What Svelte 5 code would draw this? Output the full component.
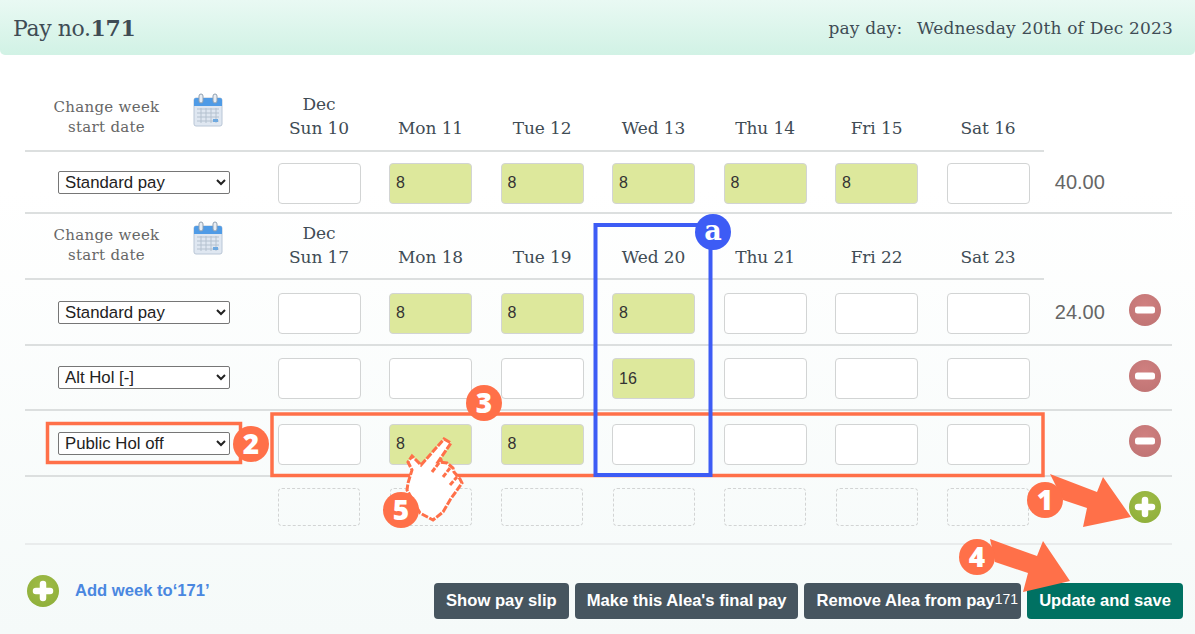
<script lang="ts">
	const payTypes = ['Standard pay', 'Alt Hol [-]', 'Public Hol off'];

	const weeks = [
		{
			days: ['Sun 10', 'Mon 11', 'Tue 12', 'Wed 13', 'Thu 14', 'Fri 15', 'Sat 16'],
			rows: [{ type: 'Standard pay', hours: ['', '8', '8', '8', '8', '8', ''], total: '40.00', remove: false }]
		},
		{
			days: ['Sun 17', 'Mon 18', 'Tue 19', 'Wed 20', 'Thu 21', 'Fri 22', 'Sat 23'],
			rows: [
				{ type: 'Standard pay', hours: ['', '8', '8', '8', '', '', ''], total: '24.00', remove: true },
				{ type: 'Alt Hol [-]', hours: ['', '', '', '16', '', '', ''], total: '', remove: true },
				{ type: 'Public Hol off', hours: ['', '8', '8', '', '', '', ''], total: '', remove: true }
			]
		}
	];

	const badges = [
		{ n: '1', x: 1045, y: 500 },
		{ n: '2', x: 251, y: 444 },
		{ n: '3', x: 484, y: 403 },
		{ n: '4', x: 977, y: 557 },
		{ n: '5', x: 401, y: 510 }
	];
</script>

{#snippet calendar()}
	<svg class="cal" width="30" height="34" viewBox="0 0 30 34">
		<rect x="1" y="5" width="28" height="28" rx="2" fill="#dfe7f1" stroke="#b9c6d6" />
		<path d="M1 13V7a2 2 0 0 1 2-2h24a2 2 0 0 1 2 2v6z" fill="#4f9be6" />
		<rect x="6" y="1" width="4" height="9" rx="2" fill="#e8edf3" stroke="#8fa0b2" />
		<rect x="20" y="1" width="4" height="9" rx="2" fill="#e8edf3" stroke="#8fa0b2" />
		<path d="M4 16h22M4 20h22M4 24h22M4 28h22M8 15v15M13 15v15M18 15v15M23 15v15" stroke="#b4c1cf" fill="none" />
		<rect x="20" y="26" width="5" height="3" fill="#6ea9e0" />
	</svg>
{/snippet}

{#snippet roundIcon(kind: string)}
	<span class="round {kind}">
		<svg width="22" height="22" viewBox="0 0 22 22">
			{#if kind === 'plus'}
				<path d="M11 4v14M4 11h14" stroke="#fff" stroke-width="6.5" stroke-linecap="round" />
			{:else}
				<rect x="1" y="7.5" width="20" height="7" rx="2.5" fill="#fff" />
			{/if}
		</svg>
	</span>
{/snippet}

<div class="page">
	<header class="top">
		<h1>Pay no.<b>171</b></h1>
		<p><span class="label">pay day:</span> Wednesday 20th of Dec 2023</p>
	</header>

	<main class="sheet">
		{#each weeks as week, w}
			<div class="week-head" class:first={w === 0}>
				<div class="change">
					<span class="change-text">Change week<br />start date</span>
					{@render calendar()}
				</div>
				{#each week.days as day, i}
					<div class="day">
						{#if i === 0}<span>Dec</span>{/if}
						<span>{day}</span>
					</div>
				{/each}
			</div>
			{#each week.rows as row, r}
				<div class="row" class:short={w === 0} class:mid={w === 1 && r === 1}>
					<div class="type">
						<select value={row.type}>
							{#each payTypes as t}
								<option>{t}</option>
							{/each}
						</select>
					</div>
					{#each row.hours as h}
						<div class="cell">
							<input type="text" value={h} class:filled={h !== ''} />
						</div>
					{/each}
					<div class="total">{row.total}</div>
					<div class="action">
						{#if row.remove}{@render roundIcon('minus')}{/if}
					</div>
				</div>
			{/each}
		{/each}

		<div class="row ghost">
			<div class="type"></div>
			{#each Array(7) as _}
				<div class="cell"><span class="slot"></span></div>
			{/each}
			<div class="total"></div>
			<div class="action">{@render roundIcon('plus')}</div>
		</div>
	</main>

	<footer class="foot">
		<a class="add" href="#add">
			{@render roundIcon('plus')}
			<span>Add week to‘171’</span>
		</a>
		<div class="buttons">
			<button>Show pay slip</button>
			<button>Make this Alea's final pay</button>
			<button class="remove">Remove Alea from pay<sup>171</sup></button>
			<button class="save">Update and save</button>
		</div>
	</footer>

	<svg class="notes" width="1195" height="634" viewBox="0 0 1195 634">
		<rect x="47.5" y="423.5" width="193" height="39" fill="none" stroke="#ff7049" stroke-width="3.5" />
		<rect x="272" y="414" width="771" height="61.5" fill="none" stroke="#ff7049" stroke-width="3.5" />

		<rect x="595.5" y="225" width="115" height="250" fill="none" stroke="#3d5cf5" stroke-width="4" />
		<circle cx="713" cy="232" r="18" fill="#3d5cf5" />
		<text class="mark slab" x="713" y="240">a</text>

		<polygon points="1050,474 1097,492 1103,477 1131,517 1083,527 1087,508 1063,500" fill="#ff7049" />
		<polygon points="990,539 1037,556 1043,541 1070,581 1023,592 1028,573 995,562" fill="#ff7049" />

		<path
			class="hand"
			d="M444 439L451 443 438 462 447 463 453 468 454 472 460 479 462 483 450 500 443 512 433 520 420 513 407 490 408 483 412 470 408 462 412 456 421 465Z"
		/>
		<path class="hand-line" d="M432 472L442 459M443 477L450 468M450 485L457 477" />

		{#each badges as b}
			<circle cx={b.x} cy={b.y} r="18" fill="#ff7049" />
			<text class="mark" x={b.x} y={b.y + 10}>{b.n}</text>
		{/each}
	</svg>
</div>

<style>
	:global(body) {
		margin: 0;
		background: #fff;
	}
	.page {
		position: relative;
		width: 1195px;
		height: 634px;
		overflow: hidden;
		background: linear-gradient(#fff 30%, #f5faf9);
		font-family: 'Liberation Sans', Arial, sans-serif;
	}
	.top {
		display: flex;
		justify-content: space-between;
		align-items: center;
		height: 55px;
		box-sizing: border-box;
		padding: 0 22px 0 13px;
		background: linear-gradient(#e9f9f3, #d1f2e5);
		border-radius: 0 0 5px 5px;
		font-family: 'DejaVu Serif', serif;
		color: #3f4c55;
	}
	h1 {
		margin: 0;
		padding-top: 1px;
		font-size: 22px;
		font-weight: 400;
		letter-spacing: -0.4px;
	}
	h1 b {
		font-weight: 700;
	}
	.top p {
		margin: 0;
		font-size: 17px;
		letter-spacing: 0.18px;
	}
	.label {
		margin-right: 9px;
	}
	.sheet {
		padding: 0 23px 0 25px;
	}
	.week-head {
		display: grid;
		grid-template-columns: 238.3px repeat(7, 111.5px);
		width: 1019px;
		height: 66px;
		box-sizing: border-box;
		border-bottom: 2px solid #dcdfdf;
		font-family: 'DejaVu Serif', serif;
		color: #3f4c55;
	}
	.week-head.first {
		height: 97px;
	}
	.change {
		display: flex;
		align-items: flex-end;
		padding-bottom: 13px;
	}
	.change-text {
		width: 163px;
		text-align: center;
		font-size: 15px;
		line-height: 20px;
		letter-spacing: 0.3px;
		color: #666;
	}
	.cal {
		margin: 0 0 10px 5px;
	}
	.day {
		display: flex;
		flex-direction: column;
		justify-content: flex-end;
		align-items: center;
		padding-bottom: 9px;
		font-size: 17px;
		line-height: 24px;
		letter-spacing: -0.1px;
	}
	.first .day {
		padding-bottom: 10px;
	}
	.row {
		display: grid;
		grid-template-columns: 238.3px repeat(7, 111.5px) 76px 1fr;
		align-items: center;
		height: 66px;
		padding-top: 2px;
		box-sizing: border-box;
		border-bottom: 2px solid #dcdfdf;
	}
	.row.short {
		height: 62px;
	}
	.row.mid {
		height: 65px;
	}
	.row.ghost {
		height: 68px;
		padding: 0 0 6px;
		border-bottom-color: #e9ecec;
	}
	.type {
		display: flex;
		margin-top: -2px;
		padding-left: 33px;
	}
	select {
		width: 172px;
		height: 23px;
		box-sizing: border-box;
		padding-left: 2px;
		font: 16.8px 'Liberation Sans', Arial, sans-serif;
		color: #222;
		background: #fff;
		border: 1px solid #767676;
		border-radius: 2px;
	}
	.cell {
		display: flex;
		justify-content: center;
	}
	input {
		width: 83px;
		height: 41px;
		box-sizing: border-box;
		padding: 0 6px;
		background: #fff;
		border: 1px solid #d2d4d4;
		border-radius: 4px;
		font: 16px 'Liberation Sans', Arial, sans-serif;
		color: #333;
	}
	input.filled {
		background: #dde89c;
	}
	.slot {
		width: 82px;
		height: 38px;
		box-sizing: border-box;
		border: 1px dashed #d2d4d4;
		border-radius: 4px;
	}
	.total {
		margin-top: -2px;
		padding-left: 11px;
		font-size: 20px;
		color: #666;
	}
	.action {
		display: flex;
		margin-top: -6px;
		padding-left: 9px;
	}
	.ghost .action {
		margin-top: 0;
	}
	.round {
		display: flex;
		align-items: center;
		justify-content: center;
		flex: none;
		width: 32px;
		height: 32px;
		border-radius: 50%;
	}
	.round.minus {
		background: radial-gradient(circle at 50% 35%, #d08080, #bd7272);
	}
	.round.plus {
		background: radial-gradient(circle at 50% 35%, #a0bc48, #8cad38);
	}
	.foot {
		display: flex;
		justify-content: space-between;
		padding: 38px 12px 0 27px;
	}
	.add {
		display: flex;
		align-items: center;
		gap: 16px;
		height: 32px;
		margin-top: -8px;
		font-size: 16.6px;
		font-weight: 700;
		color: #4a87e0;
		text-decoration: none;
	}
	.buttons {
		display: flex;
		gap: 6px;
	}
	button {
		height: 36px;
		padding: 0 12px;
		border: 0;
		border-radius: 4px;
		background: #46555f;
		font: 700 16.6px 'Liberation Sans', Arial, sans-serif;
		color: #fff;
		white-space: nowrap;
	}
	button.remove {
		padding-right: 3px;
	}
	button.save {
		background: #007162;
	}
	sup {
		vertical-align: 2px;
		font-size: 14px;
		font-weight: 400;
		line-height: 0;
	}
	.notes {
		position: absolute;
		left: 0;
		top: 0;
		pointer-events: none;
	}
	.mark {
		font: 800 28px 'Open Sans', sans-serif;
		fill: #fff;
		text-anchor: middle;
	}
	.mark.slab {
		font: 700 27px 'DejaVu Serif', serif;
	}
	.hand {
		fill: #fff;
		stroke: #ff7049;
		stroke-width: 3;
		stroke-dasharray: 7 1.5;
	}
	.hand-line {
		fill: none;
		stroke: #ff7049;
		stroke-width: 3;
		stroke-dasharray: 5 1.5;
	}
</style>
